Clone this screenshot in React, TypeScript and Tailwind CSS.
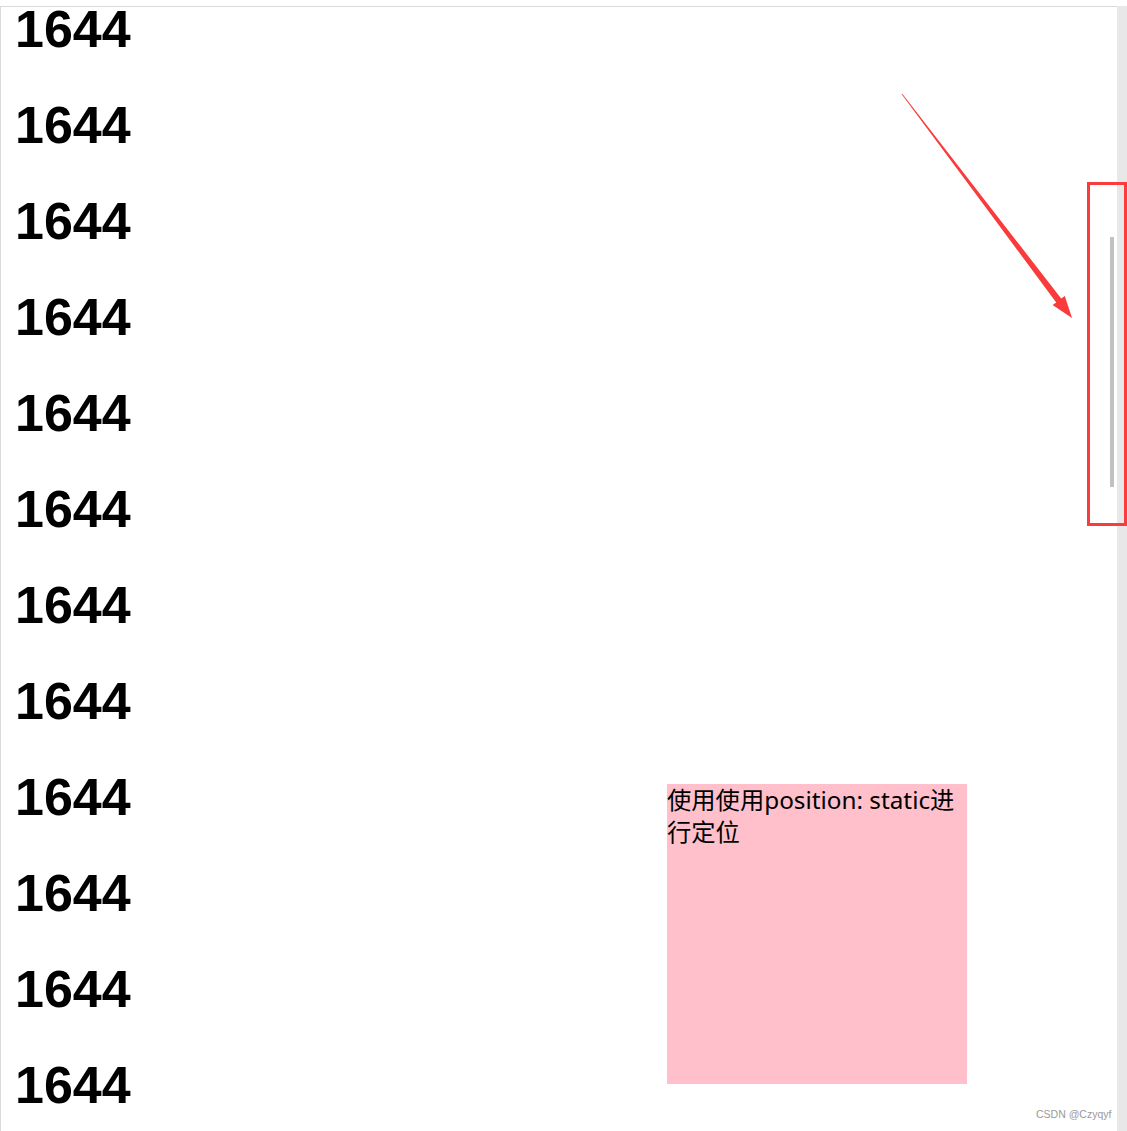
import React from 'react';

const rows = Array.from({ length: 12 }, (_, i) => i);

export default function App() {
  return (
    <div className="relative w-[1127px] h-[1131px] overflow-hidden bg-white pt-[6px]">
      <div className="h-full border-t border-l border-[#d9d9d9] pr-[10px]">
        <div className="flex flex-col gap-[44px] pl-[14px] -mt-[4px]">
          {rows.map(i => (
            <h1
              key={i}
              className="text-[52px] leading-[52px] font-bold text-black"
              style={{ fontFamily: '"Liberation Sans", Arial, sans-serif' }}
            >
              1644
            </h1>
          ))}
        </div>
      </div>

      {/* the box the post is about */}
      <div
        className="absolute left-[667px] top-[784px] w-[300px] h-[300px] bg-[#ffc0cb] text-black text-[24.3px] leading-[32px]"
        style={{ fontFamily: '"Noto Sans", "Noto Sans CJK SC", sans-serif' }}
      >
        使用使用position: static进行定位
      </div>

      {/* scrollbar */}
      <div className="absolute right-0 top-[6px] bottom-0 w-[10px] bg-[#e8e8e8]" />
      <div className="absolute left-[1110px] top-[237px] w-[4px] h-[250px] bg-[#c1c1c1]" />

      {/* annotation */}
      <div className="absolute left-[1087px] top-[182px] w-[40px] h-[344px] border-[3px] border-[#fa3c3c]" />
      <svg className="absolute left-0 top-0 pointer-events-none" width="1127" height="1131">
        <polygon
          points="901.7,94.3 1056.2,302.4 1052.6,305.1 1072,318 1064.8,295.9 1061.2,298.6 902.3,93.7"
          fill="#f93b3b"
        />
      </svg>

      <div
        className="absolute left-[1036px] top-[1107px] text-[10.5px] text-[#9a9a9a]"
        style={{ fontFamily: '"Liberation Sans", Arial, sans-serif' }}
      >
        CSDN @Czyqyf
      </div>
    </div>
  );
}
